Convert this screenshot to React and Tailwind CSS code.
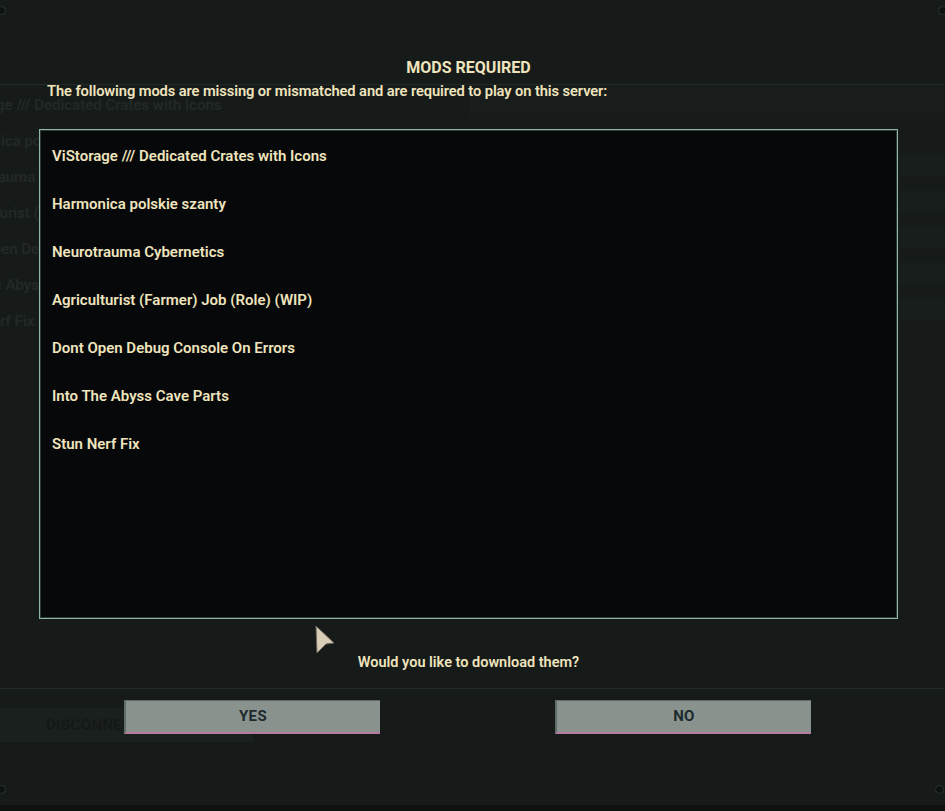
import React from 'react'

const mods = [
  "ViStorage /// Dedicated Crates with Icons",
  "Harmonica polskie szanty",
  "Neurotrauma Cybernetics",
  "Agriculturist (Farmer) Job (Role) (WIP)",
  "Dont Open Debug Console On Errors",
  "Into The Abyss Cave Parts",
  "Stun Nerf Fix",
]

function GhostScreen() {
  // faded server lobby that sits behind the dialog
  return (
    <div className="absolute inset-0 overflow-hidden">
      <div className="ml-[470px] mt-[88px] h-[31px] bg-[#1c2120]" />
      <div className="-ml-[53px] mt-[-25px] flex flex-col gap-[14px] text-[15px] font-medium text-[#393f3c]">
        {mods.map((m) => (
          <div key={m} className="h-[22px] whitespace-nowrap leading-[22px]">{m}</div>
        ))}
      </div>
      <div className="absolute left-0 top-[708px] flex h-[34px] w-[253px] items-center bg-[#222826] pl-[46px] text-[15px] font-bold tracking-wide text-[#121615]">
        DISCONNECT
      </div>
      <div className="absolute right-0 top-[155px] flex w-[47px] flex-col gap-[15px]">
        {[0, 1, 2, 3, 4].map((i) => (
          <div key={i} className="h-[21px] bg-[#1d2321]" />
        ))}
      </div>
    </div>
  )
}

function Screw({ className }) {
  return <div className={`absolute h-[9px] w-[9px] rounded-full border border-[#2d3431] bg-[#0d1110] ${className}`} />
}

function Cursor() {
  return (
    <svg className="absolute left-[314px] top-[625px]" width="22" height="30" viewBox="0 0 22 30">
      <polygon points="2,1 20,18 12,19 3,28" fill="#d8cdb6" stroke="#6e665a" strokeWidth="1" />
    </svg>
  )
}

function GameButton({ label }) {
  return (
    <button className="relative flex h-[34px] w-[256px] items-center justify-center border-l-2 border-t border-[#5e6d66] border-b-2 border-b-[#b87aa3] bg-[#8a928d] text-[15px] font-bold tracking-wide text-[#1b2a2d]">
      {label}
    </button>
  )
}

export default function App() {
  return (
    <div className="relative h-[811px] w-[945px] overflow-hidden bg-[#181d1c]" style={{ fontFamily: 'Roboto, "Noto Sans", sans-serif' }}>
      <GhostScreen />

      {/* dialog frame */}
      <div className="absolute inset-x-0 top-0 h-[805px] bg-[#151a19]/60">
        <Screw className="left-[-3px] top-[6px]" />
        <Screw className="right-[-2px] top-[6px]" />
        <Screw className="left-[-3px] top-[785px]" />
        <Screw className="right-[1px] top-[785px]" />

        <div className="absolute inset-x-0 top-[84px] h-px bg-[#232a28]" />
        <div className="absolute inset-x-0 top-[688px] h-px bg-[#232a28]" />

        <div className="ml-[39px] flex w-[859px] flex-col items-center pt-[58px]">
          <h1 className="text-[16px] font-bold leading-[20px] text-[#efe4bd]">MODS REQUIRED</h1>
          <p className="mt-[4px] w-full whitespace-nowrap pl-[8px] text-[14.7px] font-semibold leading-[18px] tracking-[-0.1px] text-[#efe4bd]">
            The following mods are missing or mismatched and are required to play on this server:
          </p>

          <div className="mt-[29px] h-[490px] w-full border border-[#8fb5a6] bg-[#060809] shadow-[inset_0_0_0_1px_#2c3a35] pt-[16px]">
            <ul className="flex flex-col">
              {mods.map((m) => (
                <li key={m} className="h-[48px] pl-[12px] text-[15px] font-semibold leading-[20px] text-[#efe4bd]">
                  {m}
                </li>
              ))}
            </ul>
          </div>

          <p className="mt-[34px] text-[14.5px] font-semibold leading-[20px] text-[#efe4bd]">Would you like to download them?</p>

          <div className="mt-[27px] flex w-full justify-center gap-[175px] pr-[2px]">
            <GameButton label="YES" />
            <GameButton label="NO" />
          </div>
        </div>
      </div>

      <div className="absolute inset-x-0 bottom-0 h-[6px] bg-[#0d1110]" />
      <Cursor />
    </div>
  )
}
